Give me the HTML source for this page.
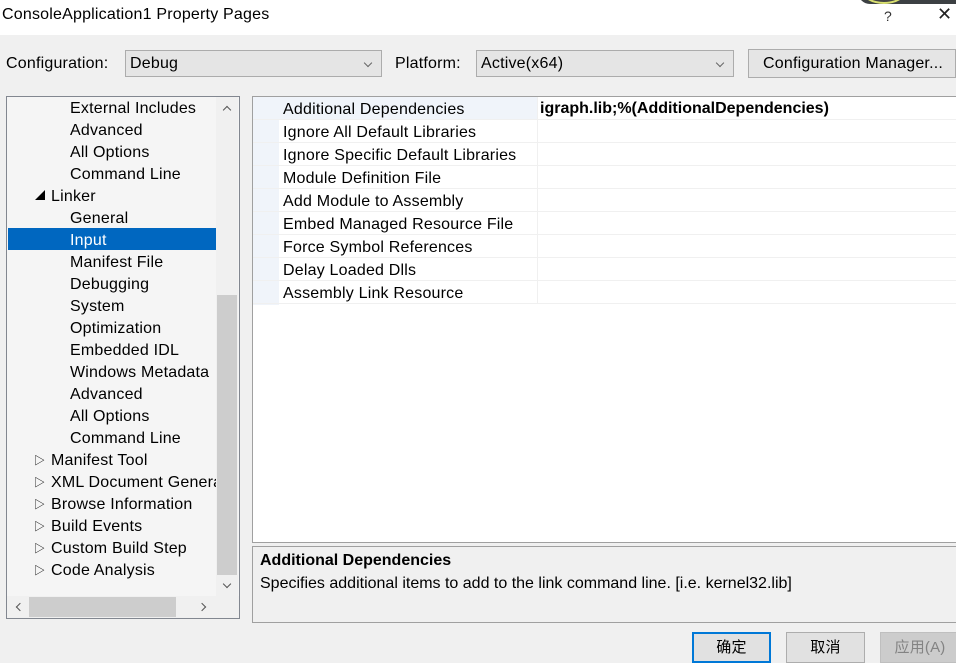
<!DOCTYPE html>
<html><head><meta charset="utf-8"><style>
*{box-sizing:border-box;margin:0;padding:0}
body{width:956px;height:663px;overflow:hidden;background:#f0f0f0;font-family:"Liberation Sans","Noto Sans CJK SC",sans-serif;font-size:16px;letter-spacing:0.2px;color:#000;position:relative}
.abs{position:absolute}
.title{left:0;top:0;width:956px;height:35px;background:#fff}
.combo{background:#e5e5e5;border:1px solid #acacac;height:27px;padding-left:4px;line-height:26px}
.chev{position:absolute;right:10px;top:9px;width:6px;height:6px;border-right:1px solid #666;border-bottom:1px solid #666;transform:rotate(45deg)}
.tree{left:6px;top:96px;width:234px;height:523px;border:1px solid #828790;background:#f5f5f5}
.ti{position:absolute;height:22px;line-height:24px;white-space:nowrap}
.grid{left:252px;top:96px;width:704px;height:447px;border:1px solid #a0a0a0;border-right:none;background:#fff}
.row{position:absolute;left:0;width:704px;height:23px;border-bottom:1px solid #f0f0f0}
.row .n{position:absolute;left:30px;top:0;line-height:25px}
.btn{border:1px solid #adadad;background:#e1e1e1;height:31px;text-align:center;line-height:30px;font-size:15px}
.sa{position:absolute;width:6px;height:6px;border-right:1.3px solid #555;border-bottom:1.3px solid #555}
</style></head><body>
<div class="abs title"></div>
<div class="abs" style="left:2px;top:6px;font-size:16px">ConsoleApplication1 Property Pages</div>
<div class="abs" style="left:858px;top:-20px;width:120px;height:24px;background:#3c4043;border-radius:12px"></div>
<div class="abs" style="left:862px;top:-22px;width:44px;height:26px;border:2px solid #d9e070;border-radius:50%;background:#444"></div>
<div class="abs" style="left:884px;top:8px;font-size:14px;color:#333">?</div>
<div class="abs" style="left:937px;top:4px;font-size:18px;color:#222">✕</div>

<div class="abs" style="left:6px;top:55px">Configuration:</div>
<div class="abs combo" style="left:125px;top:50px;width:257px">Debug<span class="chev"></span></div>
<div class="abs" style="left:395px;top:55px">Platform:</div>
<div class="abs combo" style="left:476px;top:50px;width:258px">Active(x64)<span class="chev"></span></div>
<div class="abs combo" style="left:748px;top:49px;width:208px;height:29px;line-height:28px;padding-left:14px">Configuration Manager...</div>

<div class="abs tree">
<div class="abs" style="left:1px;top:131px;width:208px;height:22px;background:#0067c0"></div>
<div class="ti" style="left:63px;top:0">External Includes</div>
<div class="ti" style="left:63px;top:22px">Advanced</div>
<div class="ti" style="left:63px;top:44px">All Options</div>
<div class="ti" style="left:63px;top:66px">Command Line</div>
<div class="ti" style="left:28px;top:88px;font-size:10px">◢</div>
<div class="ti" style="left:44px;top:88px">Linker</div>
<div class="ti" style="left:63px;top:110px">General</div>
<div class="ti" style="left:63px;top:132px;color:#fff">Input</div>
<div class="ti" style="left:63px;top:154px">Manifest File</div>
<div class="ti" style="left:63px;top:176px">Debugging</div>
<div class="ti" style="left:63px;top:198px">System</div>
<div class="ti" style="left:63px;top:220px">Optimization</div>
<div class="ti" style="left:63px;top:242px">Embedded IDL</div>
<div class="ti" style="left:63px;top:264px;width:146px;overflow:hidden">Windows Metadata</div>
<div class="ti" style="left:63px;top:286px">Advanced</div>
<div class="ti" style="left:63px;top:308px">All Options</div>
<div class="ti" style="left:63px;top:330px">Command Line</div>
<div class="ti" style="left:27px;top:352px;font-size:11px">▷</div><div class="ti" style="left:44px;top:352px">Manifest Tool</div>
<div class="ti" style="left:27px;top:374px;font-size:11px">▷</div><div class="ti" style="left:44px;top:374px;width:165px;overflow:hidden">XML Document Generator</div>
<div class="ti" style="left:27px;top:396px;font-size:11px">▷</div><div class="ti" style="left:44px;top:396px">Browse Information</div>
<div class="ti" style="left:27px;top:418px;font-size:11px">▷</div><div class="ti" style="left:44px;top:418px">Build Events</div>
<div class="ti" style="left:27px;top:440px;font-size:11px">▷</div><div class="ti" style="left:44px;top:440px">Custom Build Step</div>
<div class="ti" style="left:27px;top:462px;font-size:11px">▷</div><div class="ti" style="left:44px;top:462px">Code Analysis</div>
<div class="abs" style="left:209px;top:0;width:22px;height:499px;background:#f0f0f0"></div>
<div class="abs" style="left:210px;top:198px;width:20px;height:280px;background:#cdcdcd"></div>
<div class="sa" style="left:217px;top:10px;transform:rotate(-135deg)"></div>
<div class="sa" style="left:217px;top:484px;transform:rotate(45deg)"></div>
<div class="abs" style="left:0;top:499px;width:232px;height:22px;background:#f0f0f0"></div>
<div class="abs" style="left:22px;top:500px;width:147px;height:20px;background:#cdcdcd"></div>
<div class="sa" style="left:10px;top:507px;transform:rotate(135deg)"></div>
<div class="sa" style="left:192px;top:507px;transform:rotate(-45deg)"></div>
</div>

<div class="abs grid">
<div class="abs" style="left:0;top:0;width:26px;height:208px;background:#f0f4fa"></div>
<div class="row" style="top:0"><div class="abs" style="left:26px;top:0;width:258px;height:22px;background:#f0f4fa"></div><span class="n">Additional Dependencies</span><span class="abs" style="left:287px;top:3px;font-weight:bold;letter-spacing:0">igraph.lib;%(AdditionalDependencies)</span></div>
<div class="row" style="top:23px"><span class="n">Ignore All Default Libraries</span></div>
<div class="row" style="top:46px"><span class="n">Ignore Specific Default Libraries</span></div>
<div class="row" style="top:69px"><span class="n">Module Definition File</span></div>
<div class="row" style="top:92px"><span class="n">Add Module to Assembly</span></div>
<div class="row" style="top:115px"><span class="n">Embed Managed Resource File</span></div>
<div class="row" style="top:138px"><span class="n">Force Symbol References</span></div>
<div class="row" style="top:161px"><span class="n">Delay Loaded Dlls</span></div>
<div class="row" style="top:184px"><span class="n">Assembly Link Resource</span></div>
<div class="abs" style="left:284px;top:0;width:1px;height:207px;background:#f0f0f0"></div>
</div>

<div class="abs" style="left:252px;top:546px;width:704px;height:77px;border:1px solid #a0a0a0;border-right:none"></div>
<div class="abs" style="left:260px;top:552px;font-weight:bold;letter-spacing:0">Additional Dependencies</div>
<div class="abs" style="left:260px;top:575px;letter-spacing:0">Specifies additional items to add to the link command line. [i.e. kernel32.lib]</div>

<div class="abs btn" style="left:692px;top:632px;width:79px;border:2px solid #0078d7;line-height:28px">确定</div>
<div class="abs btn" style="left:786px;top:632px;width:79px">取消</div>
<div class="abs btn" style="left:880px;top:632px;width:80px;background:#ccc;border-color:#bfbfbf;color:#838383">应用(A)</div>
</body></html>
